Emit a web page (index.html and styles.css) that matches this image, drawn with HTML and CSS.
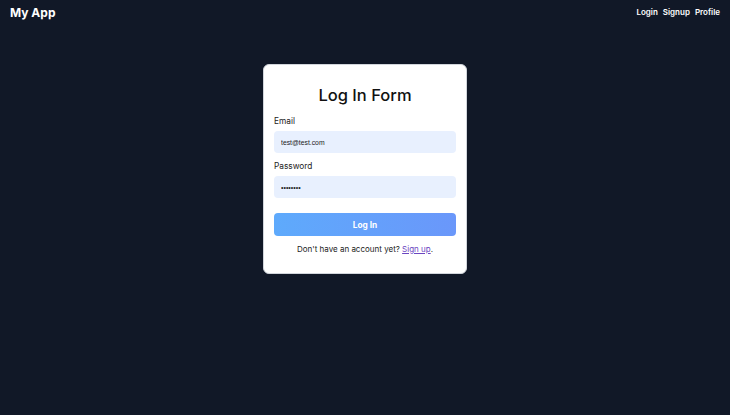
FILE: index.html
```html
<!DOCTYPE html>
<html>
<head>
<meta charset="utf-8">
<link rel="stylesheet" href="styles.css">
</head>
<body>
<nav class="nav">
  <a class="brand" href="#">My App</a>
  <div class="links">
    <a href="#">Login</a>
    <a href="#">Signup</a>
    <a href="#">Profile</a>
  </div>
</nav>
<main class="main">
  <form class="card">
    <h1 class="title">Log In Form</h1>
    <label class="label" for="email">Email</label>
    <input class="input" id="email" type="text" value="test@test.com">
    <label class="label" for="pw">Password</label>
    <input class="input pw" id="pw" type="password" value="password">
    <button class="btn" type="button">Log In</button>
    <p class="foot">Don't have an account yet? <a href="#">Sign up</a>.</p>
  </form>
</main>
</body>
</html>
```
FILE: styles.css
```css
* { box-sizing: border-box; }
html, body { margin: 0; height: 100%; }
body {
  background: #111827;
  font-family: Inter, "Noto Sans", sans-serif;
  color: #111;
}
.nav {
  display: flex;
  justify-content: space-between;
  align-items: center;
  height: 24px;
  padding: 0 10px;
}
.brand {
  color: #fff;
  font-weight: 700;
  font-size: 12px;
  text-decoration: none;
}
.links { display: flex; gap: 5px; }
.links a {
  color: #fff;
  font-weight: 600;
  font-size: 8px;
  text-decoration: none;
}
.main {
  display: flex;
  justify-content: center;
  padding-top: 40px;
}
.card {
  width: 204px;
  background: #fff;
  border: 1px solid #d1d5db;
  border-radius: 6px;
  padding: 18px 10px 18px;
  display: flex;
  flex-direction: column;
}
.title {
  margin: 0 0 8px;
  text-align: center;
  font-size: 16.5px;
  font-weight: 500;
  line-height: 24px;
}
.label {
  font-size: 8.3px;
  line-height: 12px;
  margin-bottom: 4px;
  color: #222;
}
.input {
  height: 22px;
  border: none;
  border-radius: 4px;
  background: #e8f0fe;
  padding: 0 7px;
  font-family: "Liberation Sans", Arial, sans-serif;
  font-size: 6.8px;
  color: #222;
  margin-bottom: 7px;
  outline: none;
}
.pw { margin-bottom: 15px; font-size: 7px; }
.btn {
  height: 23px;
  border: none;
  border-radius: 4px;
  background: linear-gradient(90deg, #5eaafc, #6a97fa);
  color: #fff;
  font-family: Inter, sans-serif;
  font-weight: 700;
  font-size: 8.3px;
}
.foot {
  margin: 7px 0 0;
  text-align: center;
  font-size: 8px;
  line-height: 12px;
  color: #222;
}
.foot a { color: #6b46c1; }
```
